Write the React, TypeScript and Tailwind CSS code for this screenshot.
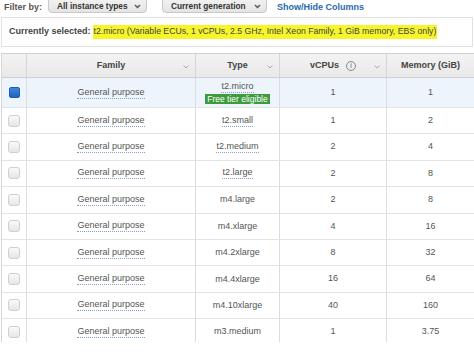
import React from "react";

type Row = {
  type: string;
  vcpus: string;
  mem: string;
  dotted?: boolean;
  selected?: boolean;
  free?: boolean;
};

const rows: Row[] = [
  { type: "t2.micro", vcpus: "1", mem: "1", dotted: true, selected: true, free: true },
  { type: "t2.small", vcpus: "1", mem: "2", dotted: true },
  { type: "t2.medium", vcpus: "2", mem: "4", dotted: true },
  { type: "t2.large", vcpus: "2", mem: "8", dotted: true },
  { type: "m4.large", vcpus: "2", mem: "8" },
  { type: "m4.xlarge", vcpus: "4", mem: "16" },
  { type: "m4.2xlarge", vcpus: "8", mem: "32" },
  { type: "m4.4xlarge", vcpus: "16", mem: "64" },
  { type: "m4.10xlarge", vcpus: "40", mem: "160" },
  { type: "m3.medium", vcpus: "1", mem: "3.75" },
];

const cols = "grid grid-cols-[25px_169px_84px_107px_1fr]";

function Caret() {
  return (
    <svg width="6" height="4" viewBox="0 0 6 4" className="absolute right-[6px] top-[11px]">
      <path d="M0.5 0.5 L3 3 L5.5 0.5" fill="none" stroke="#aaa" strokeWidth="1" />
    </svg>
  );
}

function Dropdown({ label, width }: { label: string; width: string }) {
  return (
    <div
      className={`${width} h-[20px] -mt-[7px] flex items-center justify-between pl-[8px] pr-[5px] rounded-[4px] border border-[#c8c8c8] bg-gradient-to-b from-[#f7f7f7] to-[#e4e4e4] text-[#333] font-bold text-[8.3px] whitespace-nowrap shrink-0`}
    >
      <span className="pt-[6px]">{label}</span>
      <svg width="7" height="5" viewBox="0 0 7 5" className="mt-[6px]">
        <path d="M1 1 L3.5 3.5 L6 1" fill="none" stroke="#555" strokeWidth="1.4" />
      </svg>
    </div>
  );
}

function Checkbox({ checked }: { checked?: boolean }) {
  if (checked) {
    return (
      <div className="w-[11px] h-[11px] rounded-[2px] border border-[#1f5fae] bg-gradient-to-b from-[#3f86dc] to-[#1f63c0]" />
    );
  }
  return (
    <div className="w-[12px] h-[12px] rounded-[3px] border border-[#cfcfcf] bg-gradient-to-b from-[#fafafa] to-[#e6e6e6]" />
  );
}

export default function App() {
  return (
    <div
      className="w-[474px] h-[361px] overflow-hidden bg-white text-[9px] text-[#444]"
      style={{ fontFamily: '"Liberation Sans", Arial, sans-serif' }}
    >
      {/* filter bar */}
      <div className="flex items-start h-[14px] whitespace-nowrap">
        <span className="ml-[4px] mt-[1px] w-[44px] shrink-0 font-bold text-[#555]">Filter by:</span>
        <Dropdown label="All instance types" width="w-[99px]" />
        <div className="w-[15px] shrink-0" />
        <Dropdown label="Current generation" width="w-[105px]" />
        <span className="ml-[10px] mt-[1px] font-bold text-[#2a6aa8]">Show/Hide Columns</span>
      </div>

      {/* selection summary */}
      <div className="mt-[3px] mx-[1px] h-[30px] border border-[#e2e2e2] flex items-center pl-[7px] whitespace-nowrap">
        <span className="font-bold text-[#444]">Currently selected:</span>
        <span className="ml-[2px] bg-[#f5f52a] text-[#444] px-[1px] text-[8.7px]">
          t2.micro (Variable ECUs, 1 vCPUs, 2.5 GHz, Intel Xeon Family, 1 GiB memory, EBS only)
        </span>
      </div>

      {/* table */}
      <div className="mt-[6px] ml-[1px] h-[289px] overflow-hidden border-l border-[#d6d6d6]">
        <div className={`${cols} h-[25px] border-t border-b border-[#d0d0d0] bg-gradient-to-b from-[#f3f3f3] to-[#e9e9e9] font-bold text-[#444]`}>
          <div className="border-r border-[#d6d6d6]" />
          <div className="relative flex items-center justify-center border-r border-[#d6d6d6]">
            Family
            <Caret />
          </div>
          <div className="relative flex items-center justify-center border-r border-[#d6d6d6]">
            Type
            <Caret />
          </div>
          <div className="relative flex items-center justify-center border-r border-[#d6d6d6]">
            <span>vCPUs</span>
            <span className="ml-[7px] w-[10px] h-[10px] rounded-full border border-[#888] flex items-center justify-center text-[7px] font-normal text-[#666] leading-none">
              i
            </span>
            <Caret />
          </div>
          <div className="flex items-center justify-center">Memory (GiB)</div>
        </div>

        {rows.map((r) => (
          <div
            key={r.type}
            className={`${cols} ${r.selected ? "h-[30px] bg-[#edf4fc]" : "h-[26.4px] bg-white"} border-b border-[#e3e3e3] text-[#555]`}
          >
            <div className="flex items-center justify-center border-r border-[#dcdcdc]">
              <Checkbox checked={r.selected} />
            </div>
            <div className="flex items-center justify-center border-r border-[#dcdcdc]">
              <span className="border-b border-dotted border-[#8aa0c0] leading-[11px]">General purpose</span>
            </div>
            <div className="flex flex-col items-center justify-center border-r border-[#dcdcdc]">
              <span className={r.dotted ? "border-b border-dotted border-[#8aa0c0] leading-[11px]" : "leading-[11px]"}>
                {r.type}
              </span>
              {r.free && (
                <span className="mt-[1px] px-[2px] bg-[#3d9b3d] text-white text-[8.5px] leading-[10px] whitespace-nowrap">
                  Free tier eligible
                </span>
              )}
            </div>
            <div className="flex items-center justify-center border-r border-[#dcdcdc]">{r.vcpus}</div>
            <div className="flex items-center justify-center">{r.mem}</div>
          </div>
        ))}
      </div>
    </div>
  );
}
